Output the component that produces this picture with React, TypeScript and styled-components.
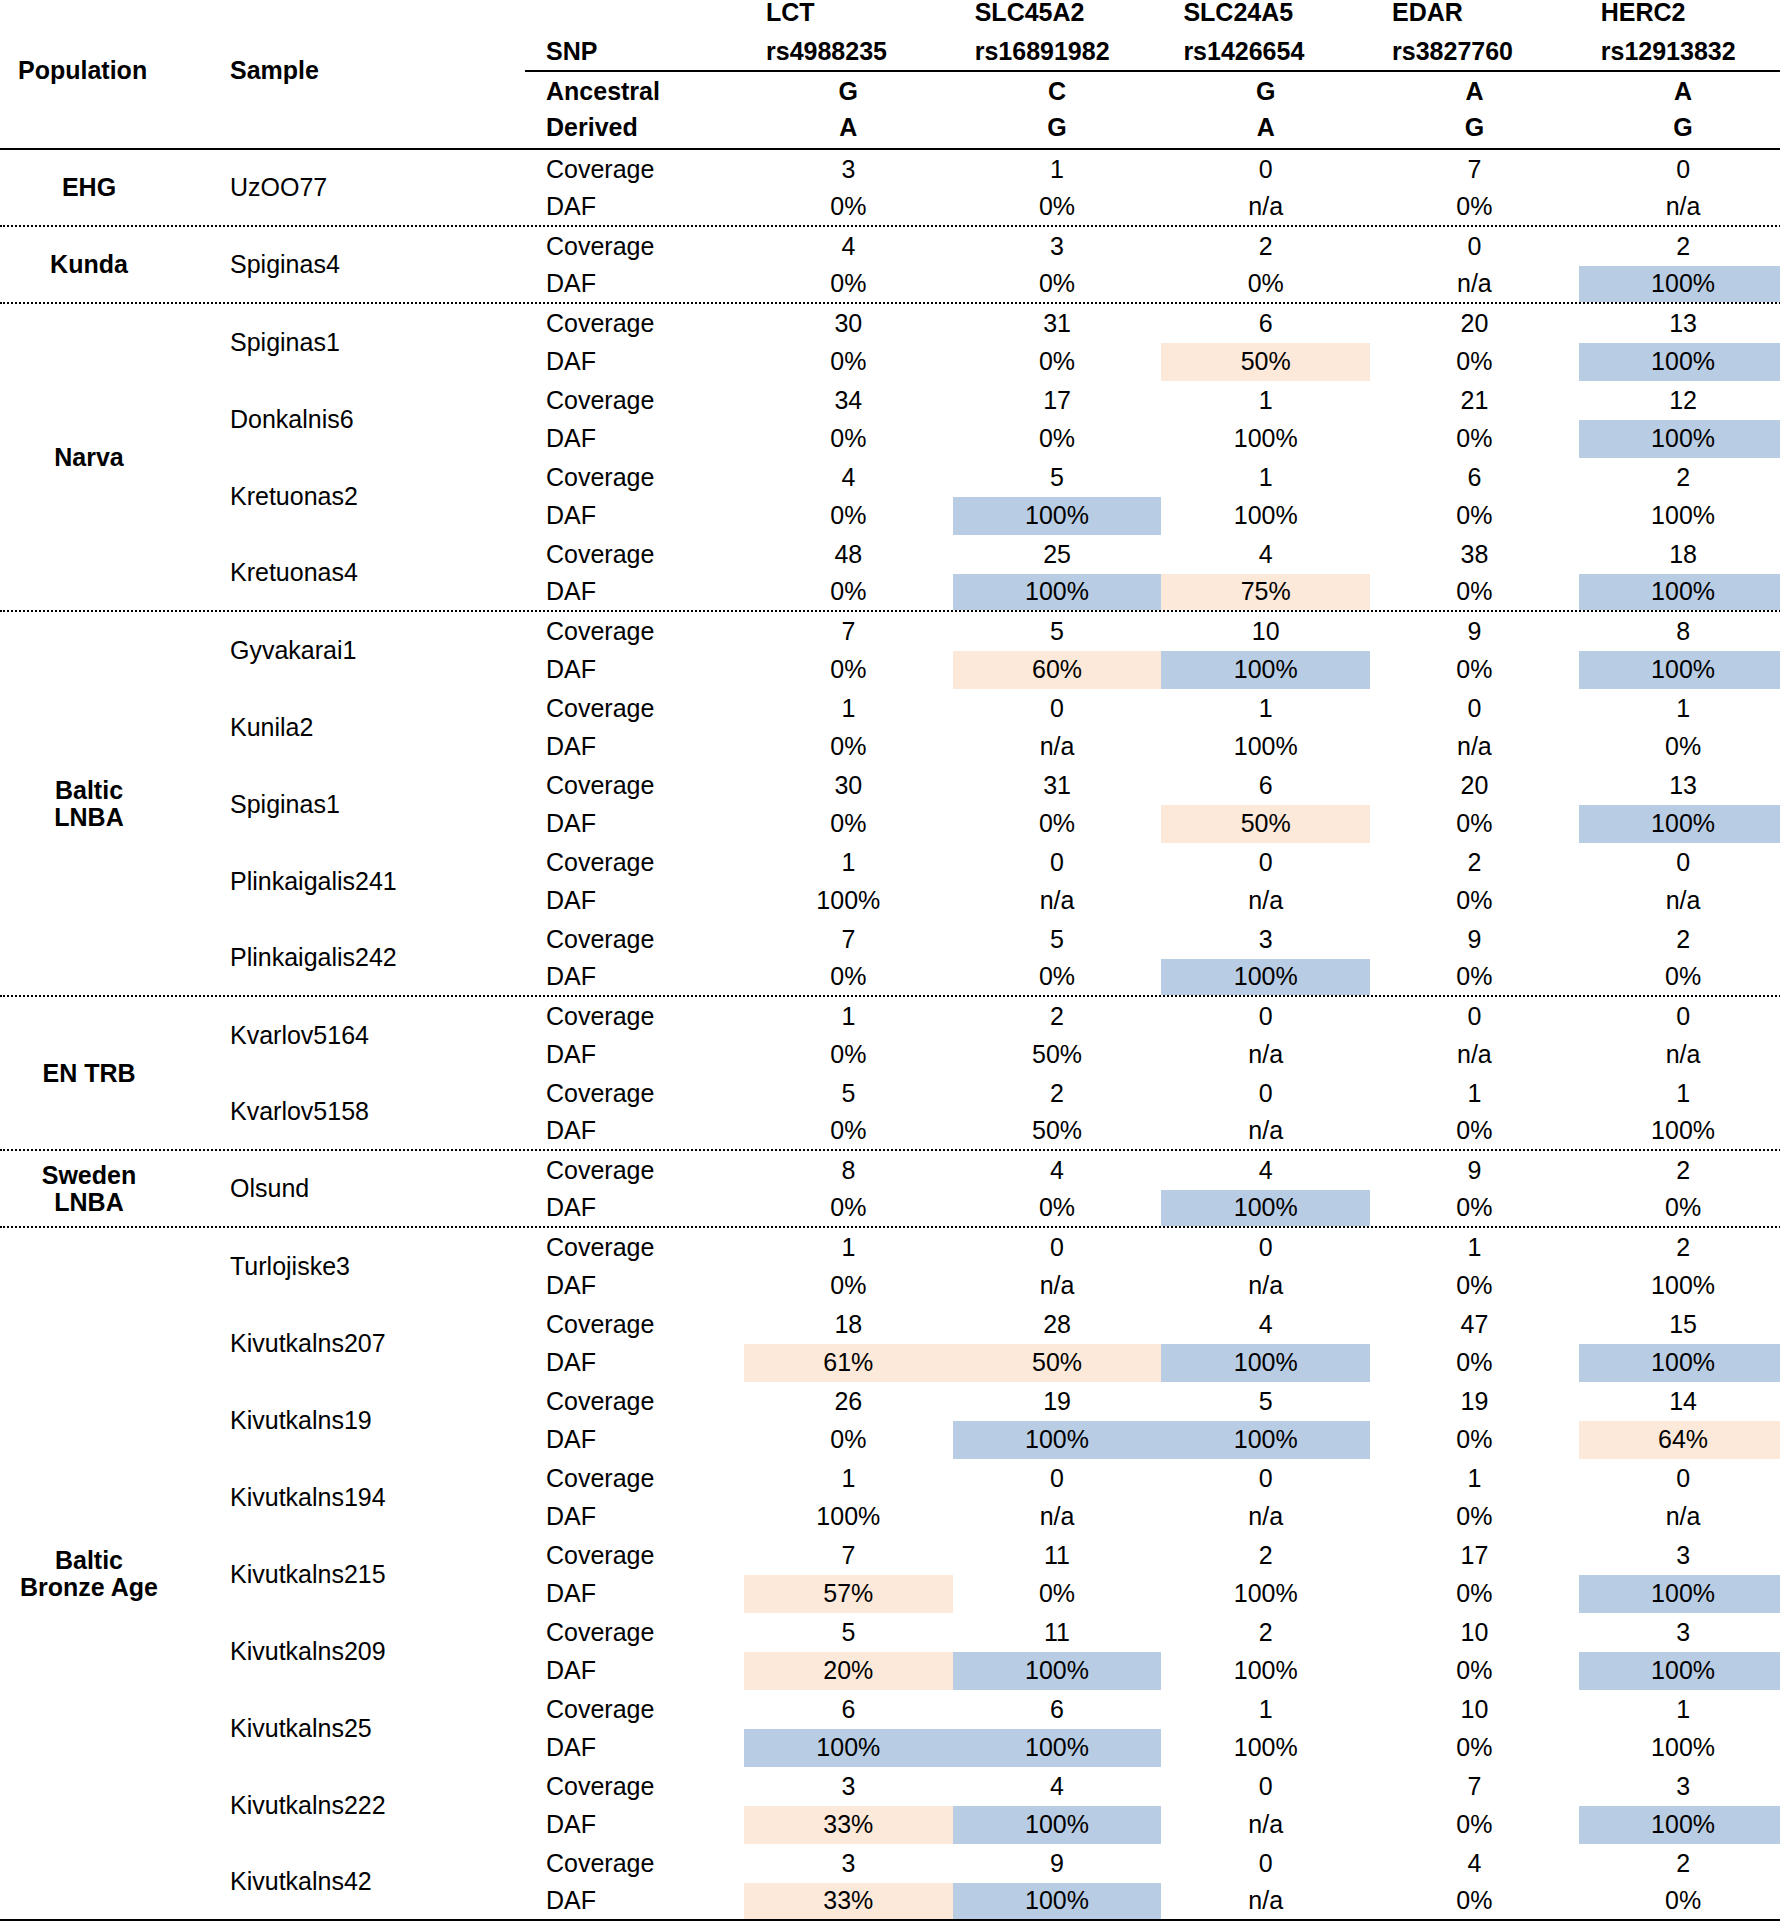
import React from 'react';
import styled, { createGlobalStyle } from 'styled-components';

type Tone = 'blue' | 'peach' | undefined;

const GlobalStyle = createGlobalStyle`
    html, body {
        margin: 0;
        padding: 0;
        background: #fff;
    }
    body {
        font-family: 'Liberation Sans', Arial, Helvetica, sans-serif;
        color: #000;
        overflow: hidden;
    }
`;

const ROW = 38.5;
const RULE = 2;
const VALUE_COLS = 'repeat(5, 208.7px)';

const tones = {
    blue: '#b8cce4',
    peach: '#fde9d9',
};

const Page = styled.div`
    width: 1780px;
    overflow: hidden;
`;

const Table = styled.div`
    width: 1787.5px;
    font-size: 25px;
`;

const Head = styled.div`
    display: flex;
    border-bottom: ${RULE}px solid #000;
    font-weight: bold;
`;

const CornerTitle = styled.div<{ $width: number; $pad: number }>`
    width: ${(p) => p.$width}px;
    padding-left: ${(p) => p.$pad}px;
    padding-bottom: 8px;
    box-sizing: border-box;
    display: flex;
    align-items: center;
`;

const HeadGrid = styled.div`
    display: grid;
    grid-template-columns: 219px ${VALUE_COLS};
    grid-template-rows: 24px 48px 38px 38px;
`;

const GeneCell = styled.div`
    display: flex;
    align-items: center;
    padding-left: 22px;
    line-height: 24px;
    white-space: nowrap;
`;

const SnpCell = styled.div<{ $label?: boolean }>`
    display: flex;
    align-items: center;
    padding-top: 8px;
    padding-left: ${(p) => (p.$label ? 21 : 22)}px;
    border-bottom: ${RULE}px solid #000;
    box-sizing: border-box;
    white-space: nowrap;
`;

const AlleleLabel = styled.div<{ $last?: boolean }>`
    display: flex;
    align-items: center;
    padding-left: 21px;
    padding-bottom: ${(p) => (p.$last ? 4 : 0)}px;
`;

const AlleleCell = styled.div<{ $last?: boolean }>`
    display: flex;
    align-items: center;
    justify-content: center;
    padding-bottom: ${(p) => (p.$last ? 4 : 0)}px;
`;

const Group = styled.div<{ $last: boolean }>`
    display: flex;
    border-bottom: ${RULE}px ${(p) => (p.$last ? 'solid' : 'dotted')} #000;
`;

const Population = styled.div`
    width: 178px;
    flex-shrink: 0;
    display: flex;
    align-items: center;
    justify-content: center;
    text-align: center;
    font-weight: bold;
    line-height: 27px;
`;

const Samples = styled.div`
    display: flex;
    flex-direction: column;
`;

// the group rule sits inside the last row, so that row is shorter by the rule
const SampleBlock = styled.div<{ $last: boolean }>`
    display: grid;
    grid-template-columns: 347px 219px ${VALUE_COLS};
    grid-template-rows: ${ROW}px ${(p) => (p.$last ? ROW - RULE : ROW)}px;
`;

const SampleName = styled.div`
    grid-row: 1 / span 2;
    display: flex;
    align-items: center;
    padding-left: 52px;
`;

const Measure = styled.div`
    display: flex;
    align-items: center;
    padding-left: 21px;
`;

const Value = styled.div<{ $tone: Tone }>`
    display: flex;
    align-items: center;
    justify-content: center;
    background: ${(p) => (p.$tone ? tones[p.$tone] : 'transparent')};
`;

const genes = [
    ['LCT', 'rs4988235', 'G', 'A'],
    ['SLC45A2', 'rs16891982', 'C', 'G'],
    ['SLC24A5', 'rs1426654', 'G', 'A'],
    ['EDAR', 'rs3827760', 'A', 'G'],
    ['HERC2', 'rs12913832', 'A', 'G'],
];

type Sample = { name: string; cov: string; daf: string };
type PopGroup = { pop: string[]; samples: Sample[] };

// daf: trailing b = blue cell, p = peach cell
const data: PopGroup[] = [
    { pop: ['EHG'], samples: [{ name: 'UzOO77', cov: '3 1 0 7 0', daf: '0% 0% n/a 0% n/a' }] },
    { pop: ['Kunda'], samples: [{ name: 'Spiginas4', cov: '4 3 2 0 2', daf: '0% 0% 0% n/a 100%b' }] },
    {
        pop: ['Narva'],
        samples: [
            { name: 'Spiginas1', cov: '30 31 6 20 13', daf: '0% 0% 50%p 0% 100%b' },
            { name: 'Donkalnis6', cov: '34 17 1 21 12', daf: '0% 0% 100% 0% 100%b' },
            { name: 'Kretuonas2', cov: '4 5 1 6 2', daf: '0% 100%b 100% 0% 100%' },
            { name: 'Kretuonas4', cov: '48 25 4 38 18', daf: '0% 100%b 75%p 0% 100%b' },
        ],
    },
    {
        pop: ['Baltic', 'LNBA'],
        samples: [
            { name: 'Gyvakarai1', cov: '7 5 10 9 8', daf: '0% 60%p 100%b 0% 100%b' },
            { name: 'Kunila2', cov: '1 0 1 0 1', daf: '0% n/a 100% n/a 0%' },
            { name: 'Spiginas1', cov: '30 31 6 20 13', daf: '0% 0% 50%p 0% 100%b' },
            { name: 'Plinkaigalis241', cov: '1 0 0 2 0', daf: '100% n/a n/a 0% n/a' },
            { name: 'Plinkaigalis242', cov: '7 5 3 9 2', daf: '0% 0% 100%b 0% 0%' },
        ],
    },
    {
        pop: ['EN TRB'],
        samples: [
            { name: 'Kvarlov5164', cov: '1 2 0 0 0', daf: '0% 50% n/a n/a n/a' },
            { name: 'Kvarlov5158', cov: '5 2 0 1 1', daf: '0% 50% n/a 0% 100%' },
        ],
    },
    { pop: ['Sweden', 'LNBA'], samples: [{ name: 'Olsund', cov: '8 4 4 9 2', daf: '0% 0% 100%b 0% 0%' }] },
    {
        pop: ['Baltic', 'Bronze Age'],
        samples: [
            { name: 'Turlojiske3', cov: '1 0 0 1 2', daf: '0% n/a n/a 0% 100%' },
            { name: 'Kivutkalns207', cov: '18 28 4 47 15', daf: '61%p 50%p 100%b 0% 100%b' },
            { name: 'Kivutkalns19', cov: '26 19 5 19 14', daf: '0% 100%b 100%b 0% 64%p' },
            { name: 'Kivutkalns194', cov: '1 0 0 1 0', daf: '100% n/a n/a 0% n/a' },
            { name: 'Kivutkalns215', cov: '7 11 2 17 3', daf: '57%p 0% 100% 0% 100%b' },
            { name: 'Kivutkalns209', cov: '5 11 2 10 3', daf: '20%p 100%b 100% 0% 100%b' },
            { name: 'Kivutkalns25', cov: '6 6 1 10 1', daf: '100%b 100%b 100% 0% 100%' },
            { name: 'Kivutkalns222', cov: '3 4 0 7 3', daf: '33%p 100%b n/a 0% 100%b' },
            { name: 'Kivutkalns42', cov: '3 9 0 4 2', daf: '33%p 100%b n/a 0% 0%' },
        ],
    },
];

function parse(v: string): { text: string; tone: Tone } {
    if (v.endsWith('b')) return { text: v.slice(0, -1), tone: 'blue' };
    if (v.endsWith('p')) return { text: v.slice(0, -1), tone: 'peach' };
    return { text: v, tone: undefined };
}

function SampleRows({ sample, last }: { sample: Sample; last: boolean }) {
    return (
        <SampleBlock $last={last}>
            <SampleName>{sample.name}</SampleName>
            <Measure>Coverage</Measure>
            {sample.cov.split(' ').map((c, i) => (
                <Value key={'c' + i} $tone={undefined}>
                    {c}
                </Value>
            ))}
            <Measure>DAF</Measure>
            {sample.daf.split(' ').map((d, i) => {
                const { text, tone } = parse(d);
                return (
                    <Value key={'d' + i} $tone={tone}>
                        {text}
                    </Value>
                );
            })}
        </SampleBlock>
    );
}

export default function App(): JSX.Element {
    return (
        <Page>
            <GlobalStyle />
            <Table>
                <Head>
                    <CornerTitle $width={178} $pad={18}>
                        Population
                    </CornerTitle>
                    <CornerTitle $width={347} $pad={52}>
                        Sample
                    </CornerTitle>
                    <HeadGrid>
                        <GeneCell />
                        {genes.map((g) => (
                            <GeneCell key={g[0]}>{g[0]}</GeneCell>
                        ))}
                        <SnpCell $label>SNP</SnpCell>
                        {genes.map((g) => (
                            <SnpCell key={g[1]}>{g[1]}</SnpCell>
                        ))}
                        <AlleleLabel>Ancestral</AlleleLabel>
                        {genes.map((g) => (
                            <AlleleCell key={g[0] + 'a'}>{g[2]}</AlleleCell>
                        ))}
                        <AlleleLabel $last>Derived</AlleleLabel>
                        {genes.map((g) => (
                            <AlleleCell key={g[0] + 'd'} $last>
                                {g[3]}
                            </AlleleCell>
                        ))}
                    </HeadGrid>
                </Head>
                {data.map((group, gi) => (
                    <Group key={gi} $last={gi === data.length - 1}>
                        <Population>
                            <div>
                                {group.pop.map((line) => (
                                    <div key={line}>{line}</div>
                                ))}
                            </div>
                        </Population>
                        <Samples>
                            {group.samples.map((s, si) => (
                                <SampleRows
                                    key={s.name}
                                    sample={s}
                                    last={si === group.samples.length - 1}
                                />
                            ))}
                        </Samples>
                    </Group>
                ))}
            </Table>
        </Page>
    );
}
